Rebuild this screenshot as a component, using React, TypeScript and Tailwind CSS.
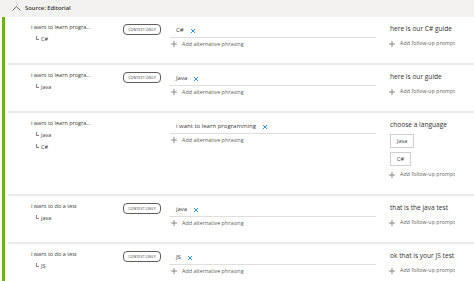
import React from "react";

type QA = {
  question: string;
  subs: string[];
  contextOnly: boolean;
  phrase: string;
  answer: string;
  prompts?: string[];
};

const rows: QA[] = [
  { question: "i want to learn progra...", subs: ["C#"], contextOnly: true, phrase: "C#", answer: "here is our C# guide" },
  { question: "i want to learn progra...", subs: ["Java"], contextOnly: true, phrase: "Java", answer: "here is our guide" },
  {
    question: "i want to learn progra...",
    subs: ["Java", "C#"],
    contextOnly: false,
    phrase: "i want to learn programming",
    answer: "choose a language",
    prompts: ["Java", "C#"],
  },
  { question: "i want to do a test", subs: ["java"], contextOnly: true, phrase: "java", answer: "that is the java test" },
  { question: "i want to do a test", subs: ["JS"], contextOnly: true, phrase: "JS", answer: "ok that is your JS test" },
];

const Plus = () => (
  <svg width="6" height="6" viewBox="0 0 6 6" className="shrink-0">
    <path d="M3 0V6M0 3H6" stroke="#605e5c" strokeWidth="0.7" />
  </svg>
);

const Close = () => (
  <svg width="6" height="6" viewBox="0 0 6 6" className="shrink-0">
    <path d="M1 1L5 5M5 1L1 5" stroke="#0078d4" strokeWidth="0.8" />
  </svg>
);

function Row({ item, first }: { item: QA; first: boolean }) {
  return (
    <div className={`flex pb-[13px] ${first ? "" : "border-t-2 border-[#edebe9]"}`}>
      <div className="w-[115px] pl-[23px] pt-[4px] text-[5.5px] leading-[12px] text-[#3b3a39]">
        <div>{item.question}</div>
        {item.subs.map((s) => (
          <div key={s} className="flex items-center pl-[5px]">
            <span className="mr-[2px] mb-[2px] h-[4px] w-[3px] border-b border-l border-[#8a8886]" />
            {s}
          </div>
        ))}
      </div>
      <div className="w-[38px]">
        {item.contextOnly && (
          <div className="mt-[7px] flex h-[11px] w-[38px] items-center justify-center rounded-[4px] border border-[#605e5c] text-[3.6px] uppercase tracking-[0.1px] text-[#3b3a39]">
            Context-only
          </div>
        )}
      </div>
      <div className="ml-[9px] w-[206px]">
        <div className="mt-[7px] flex h-[14px] items-center border-b border-[#e1dfdd] pl-[6px] text-[6px] text-[#3b3a39]">
          {item.phrase}
          <span className="ml-[6px]">
            <Close />
          </span>
        </div>
        <div className="flex h-[12px] items-center gap-[5px] pl-[1px] text-[5.4px] whitespace-nowrap text-[#605e5c]">
          <Plus />
          Add alternative phrasing
        </div>
      </div>
      <div className="ml-[13px] flex-1 pt-[7px]">
        <div className="pl-[1px] text-[6.6px] leading-[10px] text-[#323130]">{item.answer}</div>
        {item.prompts?.map((p) => (
          <div
            key={p}
            className="mt-[4px] ml-[1px] flex h-[14px] w-fit items-center border border-[#d2d0ce] px-[6px] text-[5.5px] text-[#3b3a39]"
          >
            {p}
          </div>
        ))}
        <div className={`flex h-[12px] items-center gap-[5px] whitespace-nowrap text-[5.2px] tracking-[0.1px] text-[#605e5c] ${item.prompts ? "mt-[3px]" : "mt-[4px]"}`}>
          <Plus />
          Add follow-up prompt
        </div>
      </div>
    </div>
  );
}

export default function App() {
  return (
    <div className="h-[281px] w-[474px] overflow-hidden bg-white font-['Open_Sans',sans-serif]">
      <div className="flex h-[17px] items-center bg-[#f3f2f1] pl-[12px]">
        <svg width="9" height="5" viewBox="0 0 9 5">
          <path d="M0.5 4.5L4.5 0.7L8.5 4.5" fill="none" stroke="#323130" strokeWidth="0.7" />
        </svg>
        <span className="ml-[4px] text-[5.8px] font-semibold text-[#323130]">Source: Editorial</span>
      </div>
      <div className="flex">
        <div className="ml-[2px] w-[3px] bg-[#6bb700]" />
        <div className="ml-[3px] flex-1">
          {rows.map((r, i) => (
            <Row key={i} item={r} first={i === 0} />
          ))}
        </div>
      </div>
    </div>
  );
}
